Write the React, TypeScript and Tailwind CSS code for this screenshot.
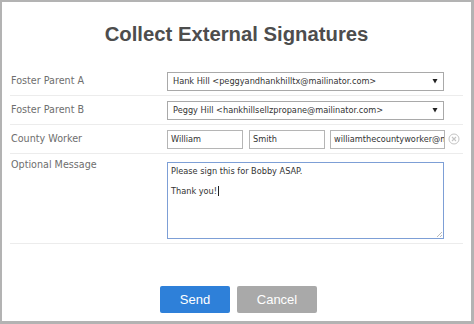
import React from 'react';

const labelCls = "w-[157px] shrink-0 pl-[1px] text-[9.6px] text-[#6e6e6e] font-['DejaVu_Sans',Verdana,sans-serif]";
const fieldText = "text-[8.2px] text-[#333] font-['DejaVu_Sans',Verdana,sans-serif]";

function Caret() {
  return (
    <svg width="6" height="5" viewBox="0 0 6 5" className="shrink-0">
      <path d="M0.5 0 L5.5 0 L3 4.5 Z" fill="#222" />
    </svg>
  );
}

function FakeSelect({ value }: { value: string }) {
  return (
    <div className={`flex h-[19px] w-[277px] items-center justify-between border border-[#a9a9a9] bg-white pl-[5px] pr-[5px] ${fieldText}`}>
      <span className="truncate">{value}</span>
      <Caret />
    </div>
  );
}

function TextBox({ value, width }: { value: string; width: string }) {
  return (
    <div className={`flex h-[19px] ${width} items-center overflow-hidden whitespace-nowrap border border-[#b5b5b5] bg-white px-[3px] ${fieldText}`}>
      {value}
    </div>
  );
}

export default function App() {
  return (
    <div className="flex h-[324px] w-[474px] flex-col border-t-2 border-l-2 border-r-[3px] border-b-[3px] border-[#b3b3b3] bg-white">
      <div className="flex h-[65px] items-center justify-center">
        <h1 className="text-[20.3px] font-bold text-[#4d4d4d] font-['Liberation_Sans',Arial,sans-serif]">
          Collect External Signatures
        </h1>
      </div>

      <div className="ml-[8px] mr-[8px] flex flex-col">
        <div className="flex h-[29px] items-center border-b border-[#ececec]">
          <div className={labelCls}>Foster Parent A</div>
          <FakeSelect value="Hank Hill <peggyandhankhilltx@mailinator.com>" />
        </div>
        <div className="flex h-[29px] items-center border-b border-[#ececec]">
          <div className={labelCls}>Foster Parent B</div>
          <FakeSelect value="Peggy Hill <hankhillsellzpropane@mailinator.com>" />
        </div>
        <div className="flex h-[29px] items-center border-b border-[#ececec]">
          <div className={labelCls}>County Worker</div>
          <div className="flex items-center">
            <TextBox value="William" width="w-[76px]" />
            <div className="ml-[6px]"><TextBox value="Smith" width="w-[76px]" /></div>
            <div className="ml-[5px]"><TextBox value="williamthecountyworker@mailinator.com" width="w-[115px]" /></div>
            <svg width="12" height="12" viewBox="0 0 12 12" className="ml-[3px]">
              <circle cx="6" cy="6" r="5" fill="none" stroke="#c4c4c4" strokeWidth="1" />
              <path d="M4 4 L8 8 M8 4 L4 8" stroke="#c4c4c4" strokeWidth="1.1" />
            </svg>
          </div>
        </div>
        <div className="flex h-[90px] items-start border-b border-[#ececec] pt-[3px]">
          <div className={`${labelCls} pt-[1px]`}>Optional Message</div>
          <div className={`relative mt-[5px] h-[77px] w-[277px] border border-[#7d9fd6] bg-white px-[3px] pt-[3px] leading-[10px] ${fieldText}`}>
            <div>Please sign this for Bobby ASAP.</div>
            <div>&nbsp;</div>
            <div className="flex items-center">
              Thank you!<span className="ml-[1px] inline-block h-[10px] w-px bg-[#222]" />
            </div>
            <svg width="6" height="6" viewBox="0 0 6 6" className="absolute bottom-[1px] right-[1px]">
              <path d="M6 1 L1 6 M6 4 L4 6" stroke="#aaa" strokeWidth="0.8" />
            </svg>
          </div>
        </div>
      </div>

      <div className="flex flex-1 items-end justify-start pb-[8px] pl-[158px]">
        <button className="h-[27px] w-[70px] rounded-[2px] bg-[#2e80d9] text-[13px] text-white font-['Liberation_Sans',Arial,sans-serif]">
          Send
        </button>
        <button className="ml-[7px] h-[27px] w-[80px] rounded-[2px] bg-[#a9a9a9] text-[13px] text-white font-['Liberation_Sans',Arial,sans-serif]">
          Cancel
        </button>
      </div>
    </div>
  );
}
